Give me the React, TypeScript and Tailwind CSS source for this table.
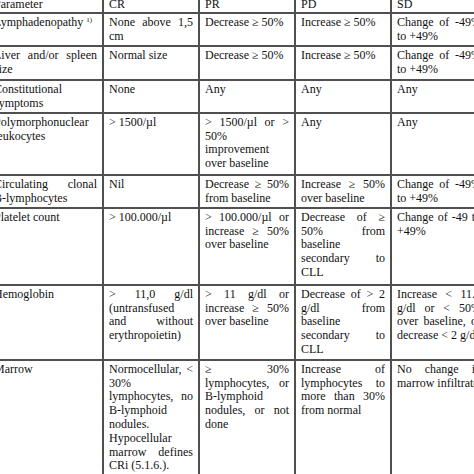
import type { ReactNode } from "react";

type Row = {
  param: ReactNode;
  cr: string;
  pr: string;
  pd: string;
  sd: string;
  h: string;
};

const rows: Row[] = [
  {
    param: (
      <>
        Lymphadenopathy <sup className="text-[7px] leading-none">1)</sup>
      </>
    ),
    cr: "None above 1,5 cm",
    pr: "Decrease ≥ 50%",
    pd: "Increase ≥ 50%",
    sd: "Change of -49% to +49%",
    h: "h-[33px]",
  },
  {
    param: "Liver and/or spleen size",
    cr: "Normal size",
    pr: "Decrease ≥ 50%",
    pd: "Increase ≥ 50%",
    sd: "Change of -49% to +49%",
    h: "h-[34px]",
  },
  {
    param: "Constitutional symptoms",
    cr: "None",
    pr: "Any",
    pd: "Any",
    sd: "Any",
    h: "h-[33px]",
  },
  {
    param: "Polymorphonuclear leukocytes",
    cr: "> 1500/µl",
    pr: "> 1500/µl or > 50% improvement over baseline",
    pd: "Any",
    sd: "Any",
    h: "h-[62px]",
  },
  {
    param: (
      <>
        Circulating clonal <span className="whitespace-nowrap">B-lymphocytes</span>
      </>
    ),
    cr: "Nil",
    pr: "Decrease ≥ 50% from baseline",
    pd: "Increase ≥ 50% over baseline",
    sd: "Change of -49% to +49%",
    h: "h-[33px]",
  },
  {
    param: "Platelet count",
    cr: "> 100.000/µl",
    pr: "> 100.000/µl or increase ≥ 50% over baseline",
    pd: "Decrease of ≥ 50% from baseline secondary to CLL",
    sd: "Change of -49 to +49%",
    h: "h-[77px]",
  },
  {
    param: "Hemoglobin",
    cr: "> 11,0 g/dl (untransfused and without erythropoietin)",
    pr: "> 11 g/dl or increase ≥ 50% over baseline",
    pd: "Decrease of > 2 g/dl from baseline secondary to CLL",
    sd: "Increase < 11.0 g/dl or < 50% over baseline, or decrease < 2 g/dl",
    h: "h-[75px]",
  },
  {
    param: "Marrow",
    cr: "Normocellular, < 30% lymphocytes, no B-lymphoid nodules. Hypocellular marrow defines CRi (5.1.6.).",
    pr: "≥ 30% lymphocytes, or B-lymphoid nodules, or not done",
    pd: "Increase of lymphocytes to more than 30% from normal",
    sd: "No change in marrow infiltrate",
    h: "h-[120px]",
  },
];

const cell = "border-2 border-[#505050] px-[5px] pt-[2px] align-top text-justify";

export default function App() {
  return (
    <div className="h-[474px] w-[474px] overflow-hidden bg-white">
      <table
        className="-ml-[13px] -mt-[6px] w-[499px] table-fixed border-collapse text-[12px] leading-[13.8px] text-[#111]"
        style={{ fontFamily: '"Liberation Serif", "Times New Roman", serif' }}
      >
        <colgroup>
          <col className="w-[115px]" />
          <col className="w-[96px]" />
          <col className="w-[96px]" />
          <col className="w-[96px]" />
          <col className="w-[96px]" />
        </colgroup>
        <thead>
          <tr className="h-[17px]">
            {["Parameter", "CR", "PR", "PD", "SD"].map((t) => (
              <th key={t} className={`${cell} text-left font-normal`}>
                {t}
              </th>
            ))}
          </tr>
        </thead>
        <tbody>
          {rows.map((r, i) => (
            <tr key={i} className={r.h}>
              <td className={cell}>{r.param}</td>
              <td className={cell}>{r.cr}</td>
              <td className={cell}>{r.pr}</td>
              <td className={cell}>{r.pd}</td>
              <td className={cell}>{r.sd}</td>
            </tr>
          ))}
        </tbody>
      </table>
    </div>
  );
}
